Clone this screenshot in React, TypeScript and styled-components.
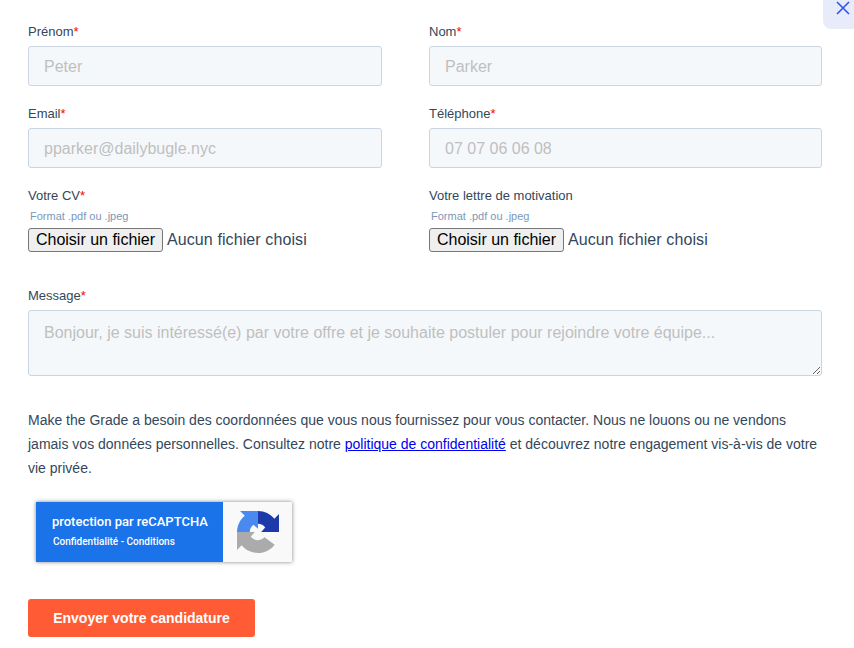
import React from "react";
import styled, { createGlobalStyle } from "styled-components";

const GlobalStyle = createGlobalStyle`
	html, body {
		margin: 0;
		padding: 0;
		background: #ffffff;
		font-family: "Liberation Sans", Arial, sans-serif;
		color: #33475b;
		overflow: hidden;
	}
`;

const CloseIcon = () => (
	<svg width="14" height="14" viewBox="0 0 14 14" fill="none">
		<path d="M1 1L13 13M13 1L1 13" stroke="#2f55ee" strokeWidth="1.6" />
	</svg>
);

const ARROW =
	"M64 32V4.7l-7.16 7.16C50.95 4.67 42.03.09 32.05.09c-10.4 0-19.62 4.96-25.46 12.64L22 24A12.5 12.5 0 0 1 32 19.5c4.5 0 8.4 2 11 5.5L36.8 32Z";

const RecaptchaLogo = () => (
	<svg width="42" height="42" viewBox="0 0 64 64">
		<defs>
			<clipPath id="q-left">
				<rect x="0" y="0" width="32" height="32" />
			</clipPath>
			<clipPath id="q-right">
				<rect x="32" y="0" width="32" height="32" />
			</clipPath>
			<clipPath id="q-bottom">
				<rect x="0" y="32" width="64" height="32" />
			</clipPath>
		</defs>
		<g clipPath="url(#q-bottom)">
			<path d={ARROW} fill="#ababab" transform="rotate(180 32 32)" />
		</g>
		<g clipPath="url(#q-left)">
			<path d={ARROW} fill="#4a8af0" transform="rotate(-90 32 32)" />
		</g>
		<g clipPath="url(#q-right)">
			<path d={ARROW} fill="#1c3aa9" />
		</g>
	</svg>
);

const FileField = () => (
	<FileRow>
		<FileButton type="button">Choisir un fichier</FileButton>
		<FileName>Aucun fichier choisi</FileName>
	</FileRow>
);

const App = () => {
	return (
		<Page>
			<GlobalStyle />
			<CloseButton type="button" aria-label="Fermer">
				<CloseIcon />
			</CloseButton>
			<Form>
				<FieldGrid>
					<Field>
						<Label>
							Prénom<Required>*</Required>
						</Label>
						<Input placeholder="Peter" />
					</Field>
					<Field>
						<Label>
							Nom<Required>*</Required>
						</Label>
						<Input placeholder="Parker" />
					</Field>
					<Field>
						<Label>
							Email<Required>*</Required>
						</Label>
						<Input placeholder="pparker@dailybugle.nyc" />
					</Field>
					<Field>
						<Label>
							Téléphone<Required>*</Required>
						</Label>
						<Input placeholder="07 07 06 06 08" />
					</Field>
					<div>
						<Label>
							Votre CV<Required>*</Required>
						</Label>
						<Hint>Format .pdf ou .jpeg</Hint>
						<FileField />
					</div>
					<div>
						<Label>Votre lettre de motivation</Label>
						<Hint>Format .pdf ou .jpeg</Hint>
						<FileField />
					</div>
				</FieldGrid>
				<MessageField>
					<Label>
						Message<Required>*</Required>
					</Label>
					<TextArea placeholder="Bonjour, je suis intéressé(e) par votre offre et je souhaite postuler pour rejoindre votre équipe..." />
				</MessageField>
				<Notice>
					Make the Grade a besoin des coordonnées que vous nous fournissez pour
					vous contacter. Nous ne louons ou ne vendons jamais vos données
					personnelles. Consultez notre <a href="#politique">politique de confidentialité</a> et
					découvrez notre engagement vis-à-vis de votre vie privée.
				</Notice>
				<Recaptcha>
					<RecaptchaText>
						<strong>protection par reCAPTCHA</strong>
						<small>Confidentialité - Conditions</small>
					</RecaptchaText>
					<RecaptchaIcon>
						<RecaptchaLogo />
					</RecaptchaIcon>
				</Recaptcha>
				<SubmitButton type="button">Envoyer votre candidature</SubmitButton>
			</Form>
		</Page>
	);
};

export default App;

const Page = styled.div`
	position: relative;
	width: 854px;
	height: 648px;
	box-sizing: border-box;
	padding: 24px 32px 0 28px;
`;
const CloseButton = styled.button`
	position: absolute;
	top: 0;
	right: 0;
	width: 31px;
	height: 29px;
	padding: 0;
	border: none;
	border-bottom-left-radius: 8px;
	background: #e8ebf9;
	display: flex;
	align-items: flex-start;
	justify-content: center;
	svg {
		margin-top: 1px;
		margin-left: 8px;
	}
`;
const Form = styled.form`
	display: flex;
	flex-direction: column;
	align-items: flex-start;
`;
const FieldGrid = styled.div`
	display: grid;
	grid-template-columns: 354px 393px;
	column-gap: 47px;
	row-gap: 20px;
`;
const Field = styled.div`
	display: flex;
	flex-direction: column;
`;
const Label = styled.label`
	display: block;
	font-size: 13px;
	line-height: 15px;
	margin-bottom: 7px;
	color: #33475b;
`;
const Required = styled.span`
	color: #ff0000;
`;
const Input = styled.input`
	box-sizing: border-box;
	width: 100%;
	height: 40px;
	padding: 2px 15px 0;
	border: 1px solid #cbd6e2;
	border-radius: 3px;
	background: #f5f8fa;
	font-family: "Liberation Sans", Arial, sans-serif;
	font-size: 16px;
	&::placeholder {
		color: #bfbfbf;
		opacity: 1;
	}
`;
const Hint = styled.div`
	margin: 0 0 6px 2px;
	font-size: 11px;
	line-height: 12px;
	color: #7c98b6;
`;
const FileRow = styled.div`
	display: flex;
	align-items: center;
	gap: 4px;
	height: 24px;
`;
const FileButton = styled.button`
	box-sizing: border-box;
	width: 135px;
	height: 24px;
	padding: 0;
	border: 1px solid #767676;
	border-radius: 3px;
	background: #efefef;
	color: #000000;
	font-family: "Liberation Sans", Arial, sans-serif;
	font-size: 16px;
`;
const FileName = styled.span`
	font-size: 16px;
	letter-spacing: 0.1px;
	color: #33475b;
`;
const MessageField = styled.div`
	width: 794px;
	margin-top: 36px;
`;
const TextArea = styled.textarea`
	display: block;
	box-sizing: border-box;
	width: 100%;
	height: 66px;
	padding: 12px 15px;
	border: 1px solid #cbd6e2;
	border-radius: 3px;
	background: #f5f8fa;
	font-family: "Liberation Sans", Arial, sans-serif;
	font-size: 16px;
	line-height: 1.2;
	resize: vertical;
	&::placeholder {
		color: #bfbfbf;
		opacity: 1;
	}
`;
const Notice = styled.p`
	width: 794px;
	margin: 32px 0 22px;
	font-size: 14px;
	line-height: 24px;
	color: #33475b;
	a {
		color: #0000ee;
	}
`;
const Recaptcha = styled.div`
	display: flex;
	width: 256px;
	height: 60px;
	margin-left: 8px;
	box-shadow: 0 0 4px rgba(0, 0, 0, 0.5);
`;
const RecaptchaText = styled.div`
	width: 187px;
	box-sizing: border-box;
	padding: 12px 0 0 16px;
	background: #1a73e8;
	color: #ffffff;
	font-family: Roboto, "Liberation Sans", sans-serif;
	strong {
		display: block;
		font-size: 13px;
		font-weight: 500;
		line-height: 15px;
	}
	small {
		display: block;
		margin: 7px 0 0 1px;
		font-size: 10px;
		font-weight: 500;
		line-height: 12px;
	}
`;
const RecaptchaIcon = styled.div`
	flex: 1;
	display: flex;
	align-items: center;
	justify-content: center;
	background: #f9f9f9;
`;
const SubmitButton = styled.button`
	width: 227px;
	height: 38px;
	margin-top: 37px;
	padding: 0;
	border: none;
	border-radius: 3px;
	background: #ff5c35;
	color: #ffffff;
	font-family: "Liberation Sans", Arial, sans-serif;
	font-size: 14px;
	font-weight: 700;
`;
